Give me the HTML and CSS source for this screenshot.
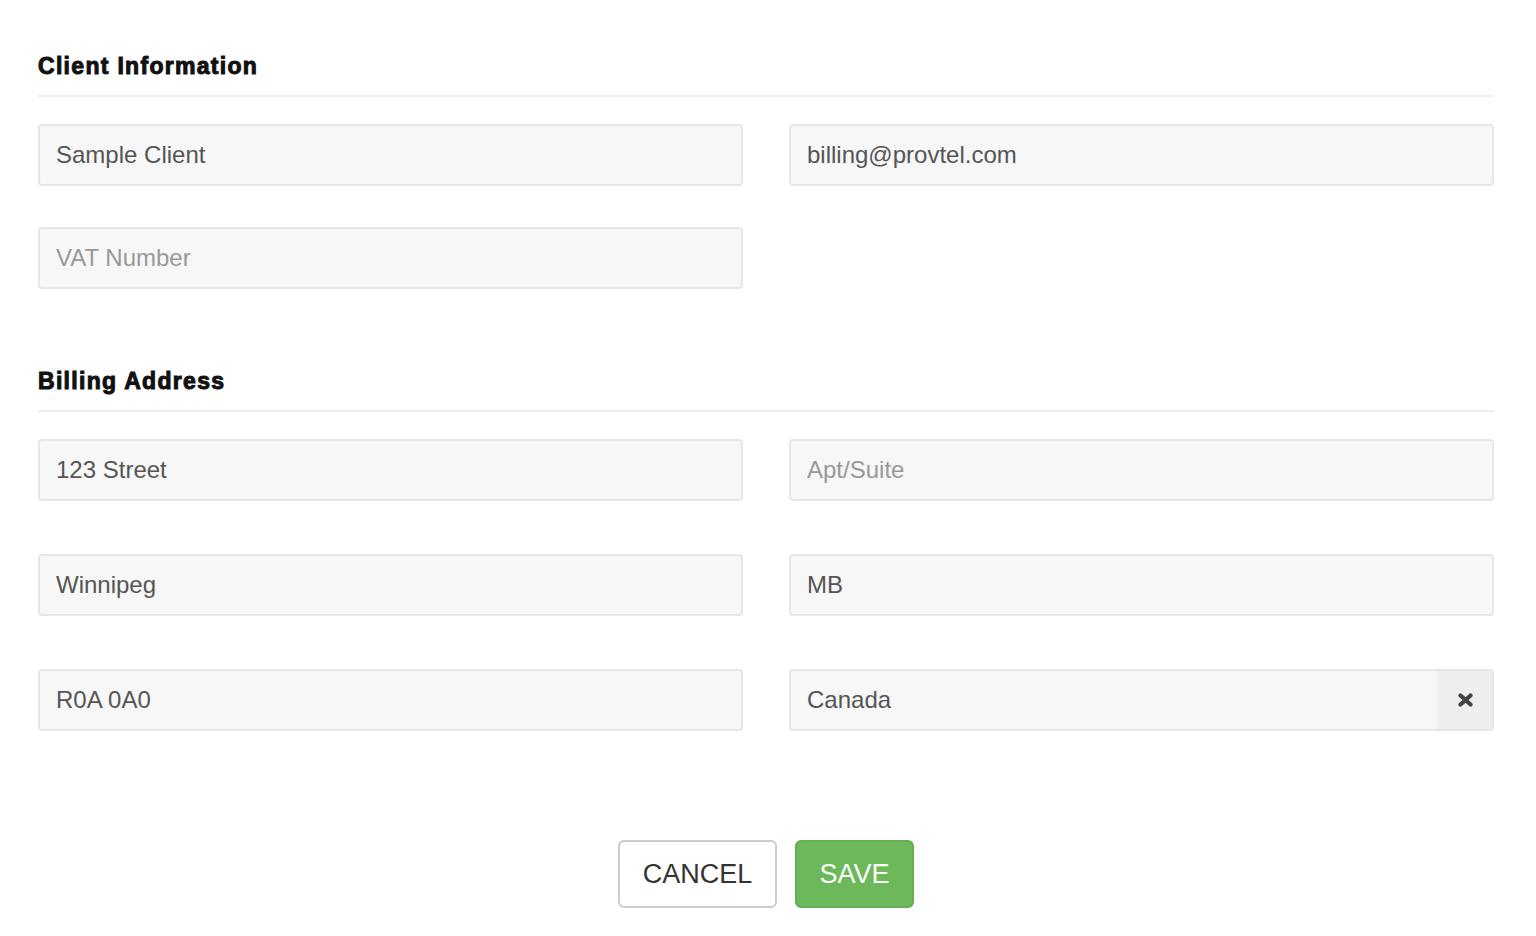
FILE: index.html
```html
<!DOCTYPE html>
<html lang="en">
<head>
    <meta charset="UTF-8">
    <meta name="viewport" content="width=device-width, initial-scale=1.0">
    <title>Client</title>
    <link rel="stylesheet" href="styles.css">
</head>
<body>
    <form class="client-form">
        <h2 class="section-title">Client Information</h2>
        <div class="field-grid tight">
            <input class="field" type="text" value="Sample Client">
            <input class="field" type="text" value="billing@provtel.com">
            <input class="field" type="text" placeholder="VAT Number">
        </div>

        <h2 class="section-title billing">Billing Address</h2>
        <div class="field-grid">
            <input class="field" type="text" value="123 Street">
            <input class="field" type="text" placeholder="Apt/Suite">
            <input class="field" type="text" value="Winnipeg">
            <input class="field" type="text" value="MB">
            <input class="field" type="text" value="R0A 0A0">
            <div class="select-box">
                <span class="select-value">Canada</span>
                <span class="select-clear">
                    <svg width="15" height="14" viewBox="0 0 15 14"><path d="M2.5 2.5 L12.5 11.5 M12.5 2.5 L2.5 11.5" stroke="#444" stroke-width="4.2" stroke-linecap="round"/></svg>
                </span>
            </div>
        </div>

        <div class="actions">
            <button type="button" class="btn btn-cancel">CANCEL</button>
            <button type="submit" class="btn btn-save">SAVE</button>
        </div>
    </form>
</body>
</html>
```

FILE: styles.css
```css
body {
    font-family: "Liberation Sans", Arial, sans-serif;
    background-color: #fff;
    margin: 0;
    padding: 0;
}

.client-form {
    padding: 53px 42px 0 38px;
}

.section-title {
    font-family: "Liberation Sans", Arial, sans-serif;
    font-size: 23px;
    font-weight: 900;
    letter-spacing: 1.3px;
    color: #111;
    margin: 0;
    padding-bottom: 15px;
    border-bottom: 2px solid #eee;
    -webkit-text-stroke: 1px #111;
}

.section-title.billing {
    margin-top: 79px;
}

.field-grid {
    display: grid;
    grid-template-columns: 1fr 1fr;
    column-gap: 46px;
    row-gap: 53px;
    margin-top: 27px;
}

.field-grid.tight {
    row-gap: 41px;
}

.field, .select-box {
    box-sizing: border-box;
    height: 62px;
    width: 100%;
    border: 2px solid #e6e6e6;
    border-radius: 4px;
    background-color: #f7f7f7;
    padding: 0 16px;
    font-family: "Liberation Sans", Arial, sans-serif;
    font-size: 24px;
    color: #555;
    outline: none;
}

.field::placeholder {
    color: #999;
}

.select-box {
    display: flex;
    align-items: center;
    padding: 0;
}

.select-value {
    flex: 1;
    padding-left: 16px;
}

.select-clear {
    width: 54px;
    height: 100%;
    display: flex;
    align-items: center;
    justify-content: center;
    background-color: #eee;
    border-left: 2px solid #f4f4f4;
}

.actions {
    display: flex;
    justify-content: center;
    gap: 18px;
    margin-top: 109px;
}

.btn {
    height: 68px;
    border-radius: 6px;
    font-family: "Liberation Sans", Arial, sans-serif;
    font-size: 27px;
    cursor: pointer;
}

.btn-cancel {
    width: 159px;
    background-color: #fff;
    border: 2px solid #ccc;
    color: #333;
}

.btn-save {
    width: 119px;
    background-color: #6cb85a;
    border: 2px solid #64b050;
    color: #fff;
}
```
